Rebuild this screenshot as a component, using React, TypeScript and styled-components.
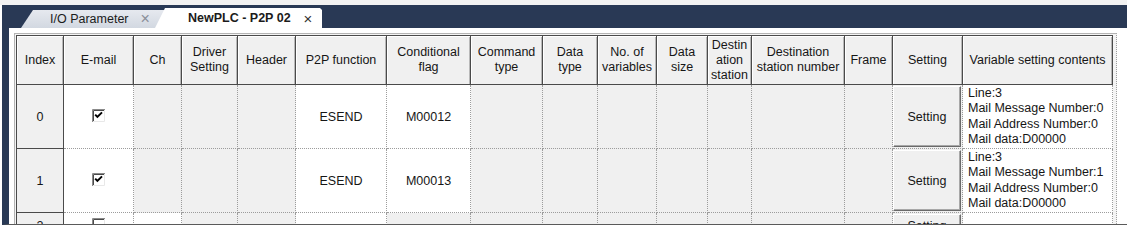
import React from 'react';
import styled, { createGlobalStyle } from 'styled-components';

const NAVY = '#293955';
const LINE = '#4a4a4a';
const DOT = '#9c9c9c';

const Global = createGlobalStyle`
  html, body { margin: 0; padding: 0; background: #fff; }
  body { font-family: "Liberation Sans", Arial, sans-serif; }
`;

const Page = styled.div`
  width: 1127px;
  height: 231px;
  padding: 5px 0 0 2px;
  box-sizing: border-box;
  background: linear-gradient(#f2f2f2 0, #f2f2f2 5px, #ffffff 5px);
  overflow: hidden;
`;

const Frame = styled.div`
  height: 220px;
  box-sizing: border-box;
  border-left: 7px solid ${NAVY};
  border-bottom: 1px solid #5a5a5a;
  display: flex;
  flex-direction: column;
  overflow: hidden;
`;

const TabStrip = styled.div`
  height: 23px;
  flex: none;
  background: ${NAVY};
  display: flex;
  align-items: flex-end;
  padding-left: 12px;
`;

const Tab = styled.div<{ $active?: boolean }>`
  display: flex;
  align-items: center;
  box-sizing: border-box;
  flex: none;
  height: ${p => (p.$active ? 20 : 18)}px;
  width: ${p => (p.$active ? 167 : 146)}px;
  margin-left: ${p => (p.$active ? -12 : 0)}px;
  padding-left: ${p => (p.$active ? 33 : 29)}px;
  background: ${p => (p.$active ? '#ffffff' : 'linear-gradient(#e6e9ef, #d2d8e1)')};
  clip-path: polygon(0 100%, ${p => (p.$active ? 10 : 12)}px 0, calc(100% - 2px) 0, 100% 2px, 100% 100%);
  font-size: 12.5px;
  font-weight: ${p => (p.$active ? 700 : 400)};
  color: #1b1b1b;
  white-space: nowrap;
`;

const Close = styled.span<{ $active?: boolean }>`
  margin-left: ${p => (p.$active ? 13 : 12)}px;
  font-size: ${p => (p.$active ? 15 : 16)}px;
  line-height: 1;
  font-weight: 400;
  color: ${p => (p.$active ? '#333' : '#8a8f99')};
`;

const Content = styled.div`
  flex: 1;
  min-height: 0;
  background: #fff;
  padding: 5px 0 0 5px;
  overflow: hidden;
`;

const GridView = styled.div`
  width: 1103px;
  height: 100%;
  box-sizing: border-box;
  border-top: 1px solid #b4b4b4;
  border-left: 1px solid #b4b4b4;
  border-right: 1px dotted #a0a0a0;
  padding: 1px 0 0 1px;
  background: #f4f4f4;
  overflow: hidden;
`;

const COLS = [47, 70, 48, 56, 58, 91, 84, 72, 55, 59, 51, 44, 93, 48, 70, 150];

const Grid = styled.div<{ $rows: string }>`
  display: grid;
  grid-template-columns: ${COLS.map(c => `${c}px`).join(' ')};
  grid-template-rows: ${p => p.$rows};
  border-left: 1px solid ${LINE};
  border-top: 1px solid ${LINE};
  width: max-content;
  font-size: 12.5px;
  color: #161616;
`;

const HeadCell = styled.div`
  background: #f0f0f0;
  border-right: 1px solid ${LINE};
  border-bottom: 1px solid ${LINE};
  box-shadow: inset 1px 1px 0 #ffffff, inset -1px 0 0 #b8b8b8;
  display: flex;
  align-items: center;
  justify-content: center;
  text-align: center;
  line-height: 15px;
  overflow: hidden;
  white-space: nowrap;
`;

const Cell = styled.div<{ $white?: boolean }>`
  background: ${p => (p.$white ? '#ffffff' : '#f0f0f0')};
  border-right: 1px dotted ${DOT};
  border-bottom: 1px dotted ${DOT};
  display: flex;
  align-items: center;
  justify-content: center;
  overflow: hidden;
  min-width: 0;
`;

const IndexCell = styled(Cell)`
  background: #f0f0f0;
  border-right: 1px solid ${LINE};
  border-bottom: 1px solid ${LINE};
`;

const SettingCell = styled(Cell)`
  align-items: stretch;
  padding: 1px 1px 1px 0;
  box-sizing: border-box;
`;

const SetButton = styled.button`
  flex: 1;
  margin: 0;
  padding: 0;
  font: inherit;
  font-size: 12.5px;
  color: #161616;
  background: #f0f0f0;
  border: 1px solid;
  border-color: #ffffff #6a6a6a #6a6a6a #ffffff;
  box-shadow: inset -1px -1px 0 #a8a8a8;
`;

const VarCell = styled(Cell)`
  flex-direction: column;
  align-items: flex-start;
  justify-content: flex-start;
  padding: 1px 0 0 5px;
  box-sizing: border-box;
  line-height: 15.3px;
  white-space: nowrap;
`;

const CheckBox: React.FC<{ checked: boolean }> = ({ checked }) => (
  <svg width="13" height="13" viewBox="0 0 13 13" style={{ marginTop: -3 }}>
    <rect x="0" y="0" width="13" height="13" fill="#ffffff" />
    <path d="M0.5 13 V0.5 H13" stroke="#8a8a8a" strokeWidth="1" fill="none" />
    <path d="M1.5 12 V1.5 H12" stroke="#4a4a4a" strokeWidth="1" fill="none" />
    <path d="M1 12.5 H12.5 V1" stroke="#e8e8e8" strokeWidth="1" fill="none" />
    {checked && (
      <path d="M3.2 5.6 L5.4 7.9 L10 3.4" stroke="#000" strokeWidth="2" fill="none" />
    )}
  </svg>
);

const HEADERS: React.ReactNode[] = [
  'Index',
  'E-mail',
  'Ch',
  <>Driver<br />Setting</>,
  'Header',
  'P2P function',
  <>Conditional<br />flag</>,
  <>Command<br />type</>,
  <>Data<br />type</>,
  <>No. of<br />variables</>,
  <>Data<br />size</>,
  <>Destin<br />ation<br />station</>,
  <>Destination<br />station number</>,
  'Frame',
  'Setting',
  'Variable setting contents',
];

type Row = {
  idx: string;
  checked: boolean;
  chWhite: boolean;
  p2p: string;
  flag: string;
  flagWhite: boolean;
  vars: string[];
  h: number;
};

const ROWS: Row[] = [
  {
    idx: '0', checked: true, chWhite: false, p2p: 'ESEND', flag: 'M00012', flagWhite: true, h: 64,
    vars: ['Line:3', 'Mail Message Number:0', 'Mail Address Number:0', 'Mail data:D00000'],
  },
  {
    idx: '1', checked: true, chWhite: false, p2p: 'ESEND', flag: 'M00013', flagWhite: true, h: 64,
    vars: ['Line:3', 'Mail Message Number:1', 'Mail Address Number:0', 'Mail data:D00000'],
  },
  {
    idx: '2', checked: false, chWhite: true, p2p: '', flag: '', flagWhite: false, h: 26,
    vars: [],
  },
];

const GRAY_COLS = ['cmd', 'dtype', 'nvars', 'dsize', 'dest', 'destno', 'frame'];

export default function App() {
  const rowTemplate = ['49px', ...ROWS.map(r => `${r.h}px`)].join(' ');
  return (
    <>
      <Global />
      <Page>
        <Frame>
          <TabStrip>
            <Tab>
              I/O Parameter<Close>×</Close>
            </Tab>
            <Tab $active>
              NewPLC - P2P 02<Close $active>×</Close>
            </Tab>
          </TabStrip>
          <Content>
            <GridView>
              <Grid $rows={rowTemplate}>
                {HEADERS.map((h, i) => (
                  <HeadCell key={`h${i}`}>{h}</HeadCell>
                ))}
                {ROWS.map(r => (
                  <React.Fragment key={r.idx}>
                    <IndexCell>{r.idx}</IndexCell>
                    <Cell $white>
                      <CheckBox checked={r.checked} />
                    </Cell>
                    <Cell $white={r.chWhite} />
                    <Cell />
                    <Cell />
                    <Cell $white>{r.p2p}</Cell>
                    <Cell $white={r.flagWhite}>{r.flag}</Cell>
                    {GRAY_COLS.map(c => (
                      <Cell key={c} />
                    ))}
                    <SettingCell>
                      <SetButton type="button">Setting</SetButton>
                    </SettingCell>
                    <VarCell $white>
                      {r.vars.map((v, i) => (
                        <span key={i}>{v}</span>
                      ))}
                    </VarCell>
                  </React.Fragment>
                ))}
              </Grid>
            </GridView>
          </Content>
        </Frame>
      </Page>
    </>
  );
}
